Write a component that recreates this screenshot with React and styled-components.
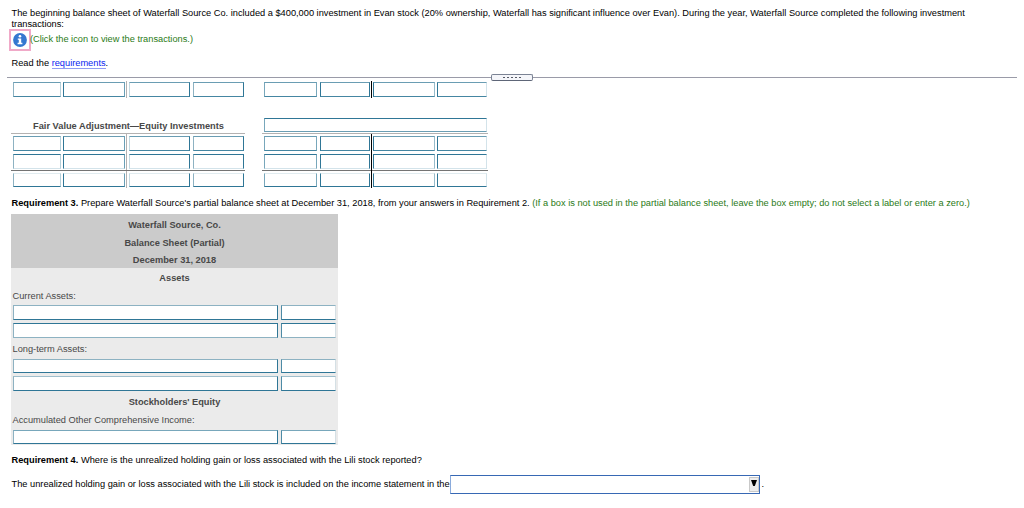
import React from "react";
import styled, { createGlobalStyle } from "styled-components";

const GlobalStyle = createGlobalStyle`
  * {
    box-sizing: border-box;
  }
  body {
    margin: 0;
    background: #fff;
    color: #000;
    font-family: "Liberation Sans", Arial, sans-serif;
    font-size: 9.25px;
  }
`;

const Page = styled.div`
  width: 1024px;
  height: 508px;
  padding: 7px 7px 0;
  overflow: hidden;
`;

const Line = styled.div`
  display: flex;
  align-items: center;
  height: ${(props) => props.$h || 12}px;
  padding-left: ${(props) => (props.$left === undefined ? 4.5 : props.$left)}px;
  margin-top: ${(props) => props.$top || 0}px;
  white-space: pre;
`;

const Green = styled.span`
  color: #2a7a17;
  padding-bottom: ${(props) => props.$lift || 0}px;
`;

const Link = styled.a`
  color: #0a1ef0;
  text-decoration: none;
  line-height: 10px;
  border-bottom: 1px solid #8f9bf5;
`;

const IconFrame = styled.span`
  display: flex;
  align-items: center;
  justify-content: center;
  width: 22px;
  height: 22px;
  border: 2px solid #f0a9c8;
  margin-right: -1px;
`;

const Divider = styled.div`
  display: flex;
  align-items: center;
  height: 7px;
  margin-top: 5px;

  &::before,
  &::after {
    content: "";
    width: 484px;
    height: 1px;
    background: #9a9ba8;
  }
`;

const Handle = styled.div`
  display: flex;
  align-items: center;
  justify-content: center;
  gap: 2px;
  width: 42px;
  height: 7px;
  border: 1px solid #7b8394;
  border-bottom-color: #5e6678;
  border-radius: 2px;
  background: #f5f6fa;

  i {
    width: 2px;
    height: 1px;
    background: #565a66;
  }
`;

const Accounts = styled.div`
  display: flex;
  gap: 17px;
  padding-left: 4px;
`;

const Account = styled.div`
  width: ${(props) => props.$w}px;
`;

const AccountRow = styled.div`
  display: flex;
  align-items: flex-start;
  height: ${(props) => props.$h}px;
  padding-left: 2px;
`;

const AccountTitle = styled.div`
  display: flex;
  align-items: flex-end;
  height: 35px;
  padding: 0 1px 1px 2px;
  color: #484848;
  font-weight: bold;

  span {
    width: 100%;
    text-align: center;
    line-height: 12px;
  }
`;

const Rule = styled.div`
  height: 1px;
  background: ${(props) => props.$color};
`;

const Stem = styled.div`
  width: 1px;
  height: ${(props) => (props.$cross ? "calc(100% + 1px)" : "100%")};
  margin: 0 ${(props) => props.$after}px 0 1px;
  background: ${(props) => props.$color};
  position: relative;
  z-index: 1;
`;

const Box = styled.div`
  width: ${(props) => props.$w}px;
  height: ${(props) => props.$h || 15}px;
  margin-top: ${(props) => props.$top || 0}px;
  margin-right: ${(props) => props.$gap || 0}px;
  border: 1px solid;
  border-color: ${(props) => props.$tb[0]} ${(props) => props.$lr[1]} ${(props) => props.$tb[1]} ${(props) => props.$lr[0]};
  background: #fff;
`;

const Sheet = styled.div`
  width: 327px;
  margin: 5px 0 0 4px;
  background: #ebebeb;
  color: #484848;
  height: 231px;
`;

const SheetHead = styled.div`
  height: 54px;
  padding-top: 2px;
  background: #cbcbcb;
`;

const Heading = styled.div`
  height: ${(props) => props.$h || 17.7}px;
  line-height: ${(props) => props.$lh || 18}px;
  font-weight: bold;
  text-align: center;
`;

const Label = styled.div`
  height: ${(props) => props.$h}px;
  padding-left: 1.5px;
  line-height: ${(props) => props.$lh || 18}px;
`;

const SheetRow = styled.div`
  display: flex;
  height: ${(props) => props.$h || 18}px;
  padding-left: 2px;
`;

const Select = styled.div`
  display: flex;
  justify-content: flex-end;
  width: 310px;
  height: 19px;
  margin: 0 2px 0 0;
  padding: 1px 0 0;
  border: 1px solid #3768b4;
  border-left-color: #8aabdc;
  background: #fff;
`;

const Sentence = styled.span`
  height: 15px;
  line-height: 14px;
`;

const Arrow = styled.div`
  display: flex;
  justify-content: center;
  width: 10px;
  height: 15px;
  padding-top: 2px;
  border: 1px solid #c9c9c9;
  background: #ededed;
`;

const DARK = "#2f7696";
const SOFT = "#8db2c2";
const PALE = "#d3e3ea";

const leftCells = [
  { w: 48, gap: 2, lr: [SOFT, "#b5d0da"] },
  { w: 62, gap: 0, lr: [DARK, "#6a9fb6"] },
  { w: 61, gap: 3, lr: ["#c3d9e1", DARK] },
  { w: 51, gap: 0, lr: [SOFT, DARK] },
];

const rightCells = [
  { w: 53, gap: 3, lr: ["#78a7bb", "#78a7bb"] },
  { w: 50, gap: 0, lr: [DARK, DARK] },
  { w: 62, gap: 2, lr: [DARK, "#98bccb"] },
  { w: 50, gap: 0, lr: [DARK, PALE] },
];

const rows = [
  { h: 18, top: 2, box: 15, tb: ["#6a9db3", "#4586a2"] },
  { h: 18, top: 2, box: 15, tb: [DARK, PALE] },
  { h: 17, top: 2, box: 14, tb: ["#e1ecf0", DARK] },
];

const Entry = ({ cells, row, stem, after, cross }) => (
  <AccountRow $h={row.h}>
    {cells.map((cell, i) => (
      <React.Fragment key={i}>
        {i === 2 && <Stem $color={stem} $after={after} $cross={cross} />}
        <Box $w={cell.w} $h={row.box} $top={row.top} $gap={cell.gap} $lr={cell.lr} $tb={row.tb} />
      </React.Fragment>
    ))}
  </AccountRow>
);

const TAccount = ({ width, cells, stem, after, cross, title }) => (
  <Account $w={width}>
    <Entry cells={cells} row={{ h: 17, top: 1, box: 15, tb: rows[0].tb }} stem={stem} after={after} />
    {title}
    <Rule $color="#b4b2b2" />
    <Entry cells={cells} row={rows[0]} stem={stem} after={after} />
    <Entry cells={cells} row={rows[1]} stem={stem} after={after} cross={cross} />
    <Rule $color="#747474" />
    <Entry cells={cells} row={rows[2]} stem={stem} after={after} />
  </Account>
);

const SheetEntry = ({ h, box, tb }) => (
  <SheetRow $h={h}>
    <Box $w={265} $h={box} $gap={3} $lr={[SOFT, DARK]} $tb={tb} />
    <Box $w={55} $h={box} $lr={["#4d8ba6", "#d5e0e5"]} $tb={tb} />
  </SheetRow>
);

const InfoIcon = () => (
  <svg width="14" height="14" viewBox="0 0 14 14">
    <circle cx="7" cy="7" r="6.9" fill="#3578d0" />
    <circle cx="7" cy="3.3" r="1.3" fill="#fff" />
    <path d="M4.8 5.4h3.4v4.3h1.2v1.5H4.6V9.7h1.2V6.8h-1z" fill="#fff" />
  </svg>
);

const App = () => {
  return (
    <>
      <GlobalStyle />
      <Page>
        <Line $h={11}>
          <span>The beginning balance sheet of Waterfall Source Co. included a $400,000 investment in Evan stock (20% ownership, Waterfall has significant influence over Evan). During the year, Waterfall Source completed the following investment</span>
        </Line>
        <Line $h={11}>
          <span>transactions:</span>
        </Line>
        <Line $h={21} $left={2}>
          <IconFrame>
            <InfoIcon />
          </IconFrame>
          <Green $lift={2}>(Click the icon to view the transactions.)</Green>
        </Line>
        <Line $top={7}>
          <span>Read the </span>
          <Link>requirements</Link>
          <span>.</span>
        </Line>
        <Divider>
          <Handle>
            <i />
            <i />
            <i />
            <i />
            <i />
          </Handle>
        </Divider>
        <Accounts>
          <TAccount
            width={234}
            cells={leftCells}
            stem="#b4b2b2"
            after={2}
            title={
              <AccountTitle>
                <span>Fair Value Adjustment—Equity Investments</span>
              </AccountTitle>
            }
          />
          <TAccount
            width={226}
            cells={rightCells}
            stem="#000"
            after={1}
            cross
            title={
              <AccountTitle>
                <Box $w={223} $h={14} $lr={["#78a7bb", PALE]} $tb={[DARK, "#6a9db3"]} />
              </AccountTitle>
            }
          />
        </Accounts>
        <Line $top={9}>
          <b>Requirement 3. </b>
          <span>Prepare Waterfall Source's partial balance sheet at December 31, 2018, from your answers in Requirement 2. </span>
          <Green>(If a box is not used in the partial balance sheet, leave the box empty; do not select a label or enter a zero.)</Green>
        </Line>
        <Sheet>
          <SheetHead>
            <Heading>Waterfall Source, Co.</Heading>
            <Heading>Balance Sheet (Partial)</Heading>
            <Heading>December 31, 2018</Heading>
          </SheetHead>
          <Heading $h={18} $lh={20}>Assets</Heading>
          <Label $h={19} $lh={20}>Current Assets:</Label>
          <SheetEntry box={15} tb={[SOFT, DARK]} />
          <SheetEntry box={15} tb={[DARK, SOFT]} />
          <Label $h={18} $lh={16}>Long-term Assets:</Label>
          <SheetEntry h={17} box={14} tb={[SOFT, DARK]} />
          <SheetEntry box={15} tb={["#9fbfcc", DARK]} />
          <Heading $h={17} $lh={16}>Stockholders' Equity</Heading>
          <Label $h={19}>Accumulated Other Comprehensive Income:</Label>
          <SheetEntry h={14} box={14} tb={["#78a7bb", DARK]} />
        </Sheet>
        <Line $top={9}>
          <b>Requirement 4. </b>
          <span>Where is the unrealized holding gain or loss associated with the Lili stock reported?</span>
        </Line>
        <Line $top={9} $h={19}>
          <Sentence>The unrealized holding gain or loss associated with the Lili stock is included on the income statement in the</Sentence>
          <Select>
            <Arrow>
              <svg width="6" height="6" viewBox="0 0 6 6">
                <path d="M0 0h6L3.8 6H2.2z" fill="#000" />
              </svg>
            </Arrow>
          </Select>
          <Sentence>.</Sentence>
        </Line>
      </Page>
    </>
  );
};

export default App;
